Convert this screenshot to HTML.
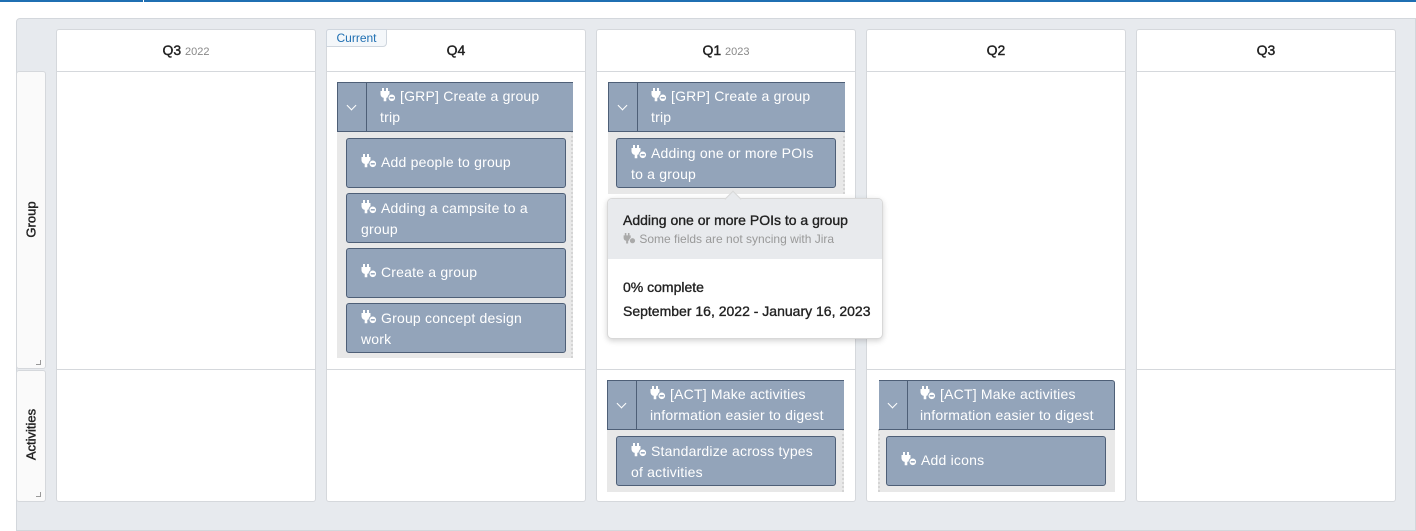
<!DOCTYPE html>
<html><head><meta charset="utf-8"><style>
*{box-sizing:border-box;margin:0;padding:0}
body{width:1416px;height:531px;background:#fff;font-family:"Liberation Sans",sans-serif;position:relative;overflow:hidden}
.abs{position:absolute}
.topbar{left:0;top:0;width:1416px;height:2px;background:#1f6fb2}
.panel{left:16px;top:18px;width:1400px;height:513px;background:#e7eaee;border:1px solid #d3d7dc;border-radius:4px 0 0 0}
.col{background:#fff;border:1px solid #d5d8dc;border-radius:3px}
.hdr{height:42px;border-bottom:1px solid #d5d8dc;text-align:center;line-height:40px;font-size:14px;color:#222;-webkit-text-stroke:0.4px #222}
.hdr span{font-size:11px;color:#888;-webkit-text-stroke:0}
.rowline{height:1px;background:#d5d8dc}
.lbl{background:#fafafa;border:1px solid #d5d8dc;border-radius:3px}
.vt{transform:rotate(-90deg);font-size:13px;color:#222;-webkit-text-stroke:0.4px #222;white-space:nowrap}
.card{background:#93a4ba;border:1px solid #4e5f77;border-radius:3px;color:#fff;font-size:14px;line-height:21px;padding:4px 14px 4px 14px;letter-spacing:0.2px}
.cont{background:#e8e8e8;border-right:2px dotted #d4d4d4}
.ph{background:#93a4ba;border:1px solid #4e5f77;border-right:none;color:#fff;font-size:14px;line-height:21px;letter-spacing:0.2px}
.tog{position:absolute;left:0;top:0;width:29px;height:100%;border-right:1px solid #4e5f77}
.tog:after{content:"";position:absolute;left:10px;top:19px;width:6px;height:6px;border-right:1.5px solid #fff;border-bottom:1.5px solid #fff;transform:rotate(45deg)}
.ic{display:inline-block;width:16px;height:14px;vertical-align:-1px;margin-right:4px}
.corner{width:5px;height:5px;border-right:1px solid #999;border-bottom:1px solid #999}
.tt{font-size:14px;color:#222;-webkit-text-stroke:0.35px #222;white-space:nowrap}
</style></head><body>
<div class="abs topbar"></div>
<div class="abs" style="left:143px;top:0;width:1px;height:2px;background:#fff"></div>
<div class="abs panel"></div>

<svg width="0" height="0" style="position:absolute"><defs><symbol id="pl" viewBox="0 0 16 14"><path d="M3 0v3.5M7 0v3.5" stroke="#fff" stroke-width="2"/><path d="M0.5 3h9v3c0 2.2-1.6 3.8-3.2 3.8v3.5h-2.6v-3.5C2.1 9.8 0.5 8.2 0.5 6z" fill="#fff"/><circle cx="11.8" cy="9.8" r="3.8" fill="#fff" stroke="#93a4ba" stroke-width="1"/><path d="M9.8 9.8h4" stroke="#93a4ba" stroke-width="1.5"/></symbol></defs></svg>

<div class="abs lbl" style="left:16px;top:71px;width:30px;height:298px"></div>
<div class="abs lbl" style="left:16px;top:370px;width:30px;height:132px"></div>
<div class="abs vt" style="left:6px;top:212px;width:50px;text-align:center">Group</div>
<div class="abs vt" style="left:-4px;top:427px;width:70px;text-align:center">Activities</div>
<div class="abs corner" style="left:36px;top:360px"></div>
<div class="abs corner" style="left:36px;top:492px"></div>

<div class="abs col" style="left:56px;top:29px;width:260px;height:473px"><div class="hdr">Q3 <span>2022</span></div><div class="rowline" style="margin-top:297px"></div></div>
<div class="abs col" style="left:326px;top:29px;width:260px;height:473px"><div class="hdr">Q4</div><div class="rowline" style="margin-top:297px"></div></div>
<div class="abs col" style="left:596px;top:29px;width:260px;height:473px"><div class="hdr">Q1 <span>2023</span></div><div class="rowline" style="margin-top:297px"></div></div>
<div class="abs col" style="left:866px;top:29px;width:260px;height:473px"><div class="hdr">Q2</div><div class="rowline" style="margin-top:297px"></div></div>
<div class="abs col" style="left:1136px;top:29px;width:260px;height:473px"><div class="hdr">Q3</div><div class="rowline" style="margin-top:297px"></div></div>
<div class="abs" style="left:326px;top:29px;width:61px;height:18px;background:#f4f7fa;border:1px solid #cfd6de;border-radius:3px 0 4px 0;font-size:12px;color:#1f6fb2;text-align:center;line-height:16px">Current</div>

<div class="abs cont" style="left:337px;top:131px;width:236px;height:227px"></div>
<div class="abs ph" style="left:337px;top:82px;width:236px;height:50px"><div class="tog"></div><div style="padding:3px 15px 0 42px"><svg class="ic"><use href="#pl"/></svg>[GRP] Create a group trip</div></div>
<div class="abs card" style="left:346px;top:138px;width:220px;height:50px;padding-top:13px"><svg class="ic"><use href="#pl"/></svg>Add people to group</div>
<div class="abs card" style="left:346px;top:193px;width:220px;height:50px"><svg class="ic"><use href="#pl"/></svg>Adding a campsite to a group</div>
<div class="abs card" style="left:346px;top:248px;width:220px;height:50px;padding-top:13px"><svg class="ic"><use href="#pl"/></svg>Create a group</div>
<div class="abs card" style="left:346px;top:303px;width:220px;height:50px"><svg class="ic"><use href="#pl"/></svg>Group concept design work</div>

<div class="abs cont" style="left:608px;top:131px;width:237px;height:63px"></div>
<div class="abs ph" style="left:608px;top:82px;width:237px;height:50px"><div class="tog"></div><div style="padding:3px 15px 0 42px"><svg class="ic"><use href="#pl"/></svg>[GRP] Create a group trip</div></div>
<div class="abs card" style="left:616px;top:138px;width:220px;height:50px"><svg class="ic"><use href="#pl"/></svg>Adding one or more POIs to a group</div>

<div class="abs cont" style="left:607px;top:429px;width:237px;height:63px"></div>
<div class="abs ph" style="left:607px;top:380px;width:237px;height:50px"><div class="tog"></div><div style="padding:3px 8px 0 42px"><svg class="ic"><use href="#pl"/></svg>[ACT] Make activities information easier to digest</div></div>
<div class="abs card" style="left:616px;top:436px;width:220px;height:50px"><svg class="ic"><use href="#pl"/></svg>Standardize across types of activities</div>

<div class="abs cont" style="left:878px;top:429px;width:237px;height:63px;border-right:none;border-left:2px dotted #d4d4d4"></div>
<div class="abs ph" style="left:879px;top:380px;width:236px;height:50px;border-right:1px solid #4e5f77;border-left:none;border-radius:0 3px 0 0"><div class="tog"></div><div style="padding:3px 8px 0 41px"><svg class="ic"><use href="#pl"/></svg>[ACT] Make activities information easier to digest</div></div>
<div class="abs card" style="left:886px;top:436px;width:220px;height:50px;padding-top:13px"><svg class="ic"><use href="#pl"/></svg>Add icons</div>

<div class="abs" style="left:607px;top:198px;width:276px;height:141px;background:#fff;border:1px solid #d8d8d8;border-radius:5px;box-shadow:0 2px 6px rgba(0,0,0,.18);overflow:hidden">
<div style="background:#e8eaed;height:60px;padding:13px 15px 0">
<div class="tt">Adding one or more POIs to a group</div>
<div style="font-size:12px;color:#999;margin-top:4px;white-space:nowrap"><svg width="13" height="11" viewBox="0 0 16 14" style="vertical-align:-1px"><path d="M3 0v3.5M7 0v3.5" stroke="#aaa" stroke-width="2"/><path d="M0.5 3h9v3c0 2.2-1.6 3.8-3.2 3.8v3.5h-2.6v-3.5C2.1 9.8 0.5 8.2 0.5 6z" fill="#aaa"/><circle cx="11.8" cy="9.8" r="3.8" fill="#aaa" stroke="#e8eaed"/></svg> Some fields are not syncing with Jira</div>
</div>
<div class="tt" style="padding:20px 15px 0">0% complete</div>
<div class="tt" style="padding:8px 15px 0">September 16, 2022 - January 16, 2023</div>
</div>
<div class="abs" style="left:727px;top:193px;width:12px;height:12px;background:#e8eaed;transform:rotate(45deg);border-left:1px solid #d8d8d8;border-top:1px solid #d8d8d8"></div>
</body></html>
